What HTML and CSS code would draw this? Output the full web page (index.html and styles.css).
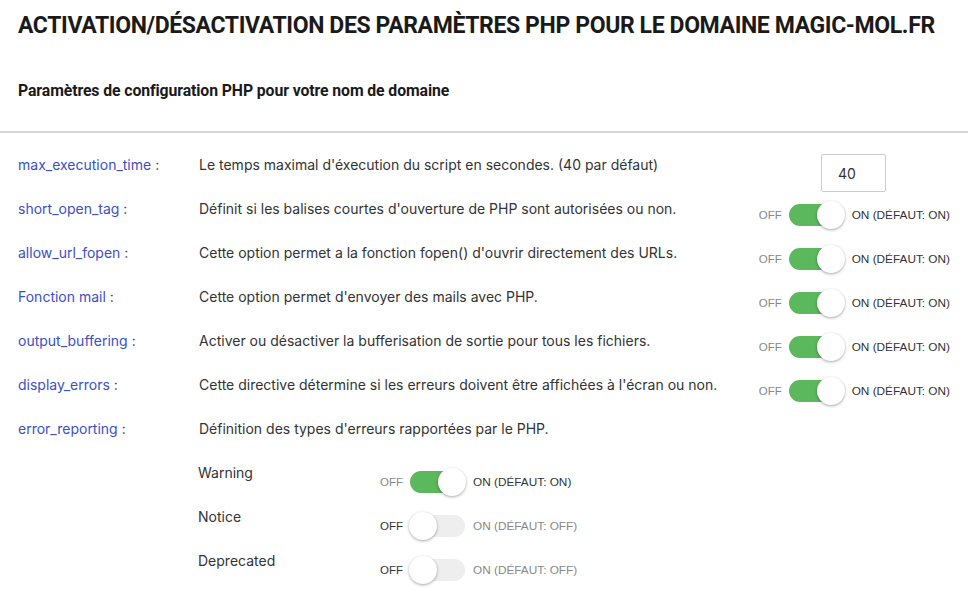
FILE: index.html
```
<!DOCTYPE html>
<html lang="fr">
<head>
<meta charset="utf-8">
<link rel="stylesheet" href="styles.css">
</head>
<body>
<h1 class="title">ACTIVATION/DÉSACTIVATION DES PARAMÈTRES PHP POUR LE DOMAINE MAGIC-MOL.FR</h1>
<h2 class="subtitle">Paramètres de configuration PHP pour votre nom de domaine</h2>
<hr class="sep">
<div class="rows">
  <div class="row">
    <div class="label"><span class="key">max_execution_time</span> :</div>
    <div class="desc">Le temps maximal d'éxecution du script en secondes. (40 par défaut)</div>
    <div class="ctrl ctrl-input"><input class="num" type="text" value="40"></div>
  </div>
  <div class="row">
    <div class="label"><span class="key">short_open_tag</span> :</div>
    <div class="desc">Définit si les balises courtes d'ouverture de PHP sont autorisées ou non.</div>
    <div class="ctrl"><span class="off">OFF</span><span class="switch on"><span class="knob"></span></span><span class="onl">ON (DÉFAUT: ON)</span></div>
  </div>
  <div class="row">
    <div class="label"><span class="key">allow_url_fopen</span> :</div>
    <div class="desc">Cette option permet a la fonction fopen() d'ouvrir directement des URLs.</div>
    <div class="ctrl"><span class="off">OFF</span><span class="switch on"><span class="knob"></span></span><span class="onl">ON (DÉFAUT: ON)</span></div>
  </div>
  <div class="row">
    <div class="label"><span class="key">Fonction mail</span> :</div>
    <div class="desc">Cette option permet d'envoyer des mails avec PHP.</div>
    <div class="ctrl"><span class="off">OFF</span><span class="switch on"><span class="knob"></span></span><span class="onl">ON (DÉFAUT: ON)</span></div>
  </div>
  <div class="row">
    <div class="label"><span class="key">output_buffering</span> :</div>
    <div class="desc">Activer ou désactiver la bufferisation de sortie pour tous les fichiers.</div>
    <div class="ctrl"><span class="off">OFF</span><span class="switch on"><span class="knob"></span></span><span class="onl">ON (DÉFAUT: ON)</span></div>
  </div>
  <div class="row">
    <div class="label"><span class="key">display_errors</span> :</div>
    <div class="desc">Cette directive détermine si les erreurs doivent être affichées à l'écran ou non.</div>
    <div class="ctrl"><span class="off">OFF</span><span class="switch on"><span class="knob"></span></span><span class="onl">ON (DÉFAUT: ON)</span></div>
  </div>
  <div class="row">
    <div class="label"><span class="key">error_reporting</span> :</div>
    <div class="desc">Définition des types d'erreurs rapportées par le PHP.</div>
  </div>
  <div class="subrow">
    <div class="subname">Warning</div>
    <div class="ctrl"><span class="off">OFF</span><span class="switch on"><span class="knob"></span></span><span class="onl">ON (DÉFAUT: ON)</span></div>
  </div>
  <div class="subrow">
    <div class="subname">Notice</div>
    <div class="ctrl"><span class="off dark">OFF</span><span class="switch"><span class="knob"></span></span><span class="onl muted">ON (DÉFAUT: OFF)</span></div>
  </div>
  <div class="subrow">
    <div class="subname">Deprecated</div>
    <div class="ctrl"><span class="off dark">OFF</span><span class="switch"><span class="knob"></span></span><span class="onl muted">ON (DÉFAUT: OFF)</span></div>
  </div>
</div>
</body>
</html>
```
FILE: styles.css
```
html, body { margin: 0; padding: 0; background: #fff; }
body { font-family: Inter, "Liberation Sans", sans-serif; color: #333; overflow: hidden; }
.title {
  margin: 0; padding: 13px 0 0 18px;
  font-family: Roboto, "Liberation Sans", sans-serif;
  font-weight: 700; font-size: 23px; line-height: 26px;
  letter-spacing: -0.38px; color: #1a1a1a;
}
.subtitle {
  margin: 0; padding: 42px 0 0 18px;
  font-family: Roboto, "Liberation Sans", sans-serif;
  font-weight: 700; font-size: 15.8px; line-height: 20px;
  letter-spacing: -0.1px; color: #1a1a1a;
}
.sep { margin: 30px 3px 0 0; border: 0; border-top: 2px solid #d5d5d5; height: 0; }
.rows { padding: 22px 0 0 18px; }
.row { display: flex; align-items: flex-start; height: 44px; }
.label { width: 181px; font-size: 14px; line-height: 20px; color: #444; }
.key { color: #3d4fc4; }
.desc { flex: 1; font-size: 14px; line-height: 20px; color: #333; }
.ctrl { display: flex; align-items: center; font-family: "Liberation Sans", Arial, sans-serif; padding-top: 5px; margin-right: 21px; }
.ctrl-input { margin-right: 85px; padding-top: 0; margin-top: -1px; }
.num {
  width: 65px; height: 38px; box-sizing: border-box;
  border: 1px solid #ccc; border-radius: 2px;
  font-family: Inter, sans-serif; font-size: 14px; color: #333;
  padding: 0 0 0 16px; outline: none;
}
.off { font-size: 11.5px; color: #888; width: 30px; }
.off.dark { color: #333; }
.switch {
  position: relative; width: 55px; height: 22px; border-radius: 11px;
  background: #eee; display: inline-block;
}
.switch.on { background: #5cb85c; }
.knob {
  position: absolute; top: -3px; left: -1px; width: 28px; height: 28px;
  border-radius: 50%; background: #fff;
  box-shadow: 0 1px 3px rgba(0,0,0,0.35);
}
.switch.on .knob { left: auto; right: -1px; }
.onl { font-size: 11.8px; color: #333; margin-left: 8px; }
.onl.muted { color: #888; }
.subrow { display: flex; align-items: flex-start; height: 44px; padding-left: 180px; }
.subname { width: 182px; font-size: 14px; line-height: 20px; color: #333; }
.subrow .ctrl { padding-top: 8px; }
```
